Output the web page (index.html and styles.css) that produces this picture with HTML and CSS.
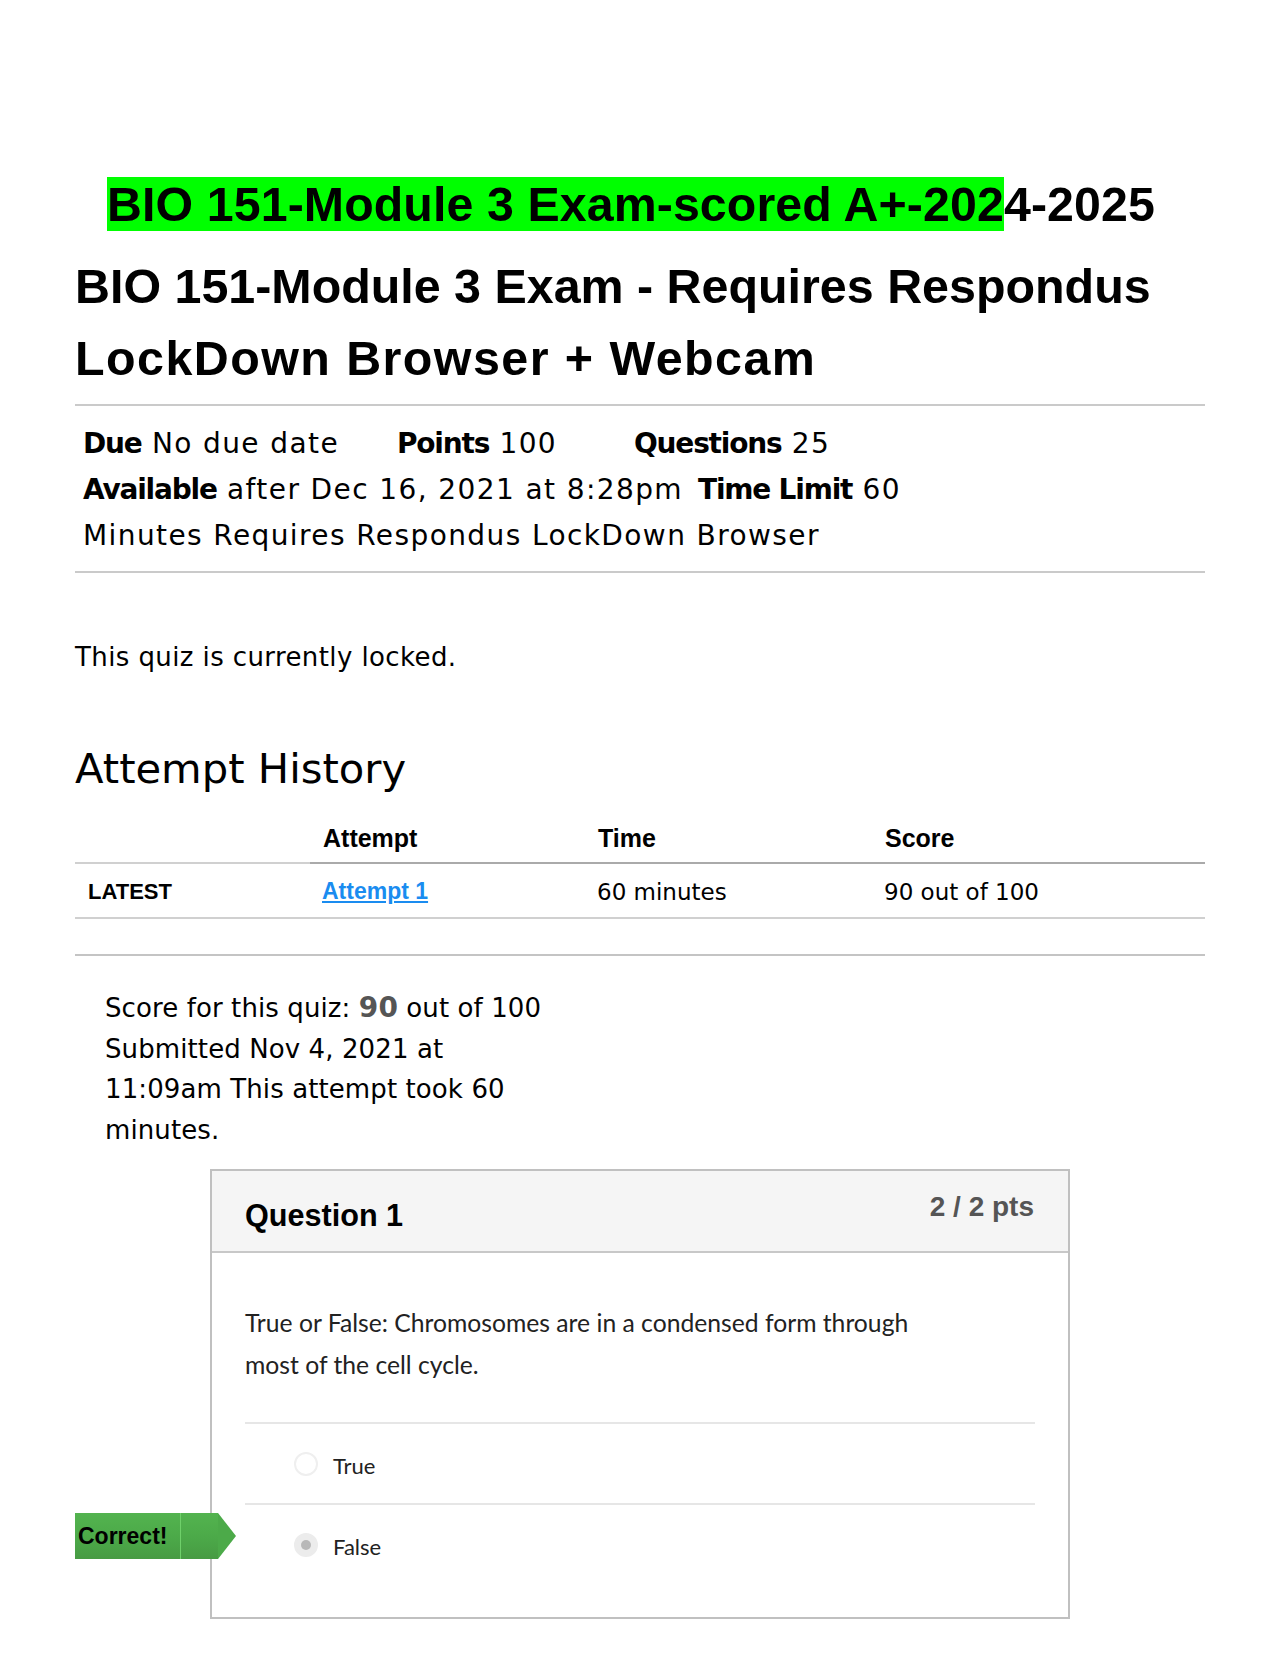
FILE: index.html
```html
<!DOCTYPE html>
<html lang="en">
<head>
<meta charset="utf-8">
<title>BIO 151-Module 3 Exam</title>
<link rel="stylesheet" href="styles.css">
</head>
<body>
<div class="page">
  <div class="doc-title"><span class="hl">BIO 151-Module 3 Exam-scored A+-202</span>4-2025</div>
  <h1 class="quiz-title">BIO 151-Module 3 Exam - Requires Respondus<br><span class="quiz-title-2">LockDown Browser + Webcam</span></h1>
  <hr class="rule rule-top">
  <div class="meta">
    <div class="meta-line">
      <span class="meta-item w1"><b>Due</b> No due date</span>
      <span class="meta-item w2"><b>Points</b> 100</span>
      <span class="meta-item"><b>Questions</b> 25</span>
    </div>
    <div class="meta-line">
      <span class="meta-item w3"><b>Available</b> after Dec 16, 2021 at 8:28pm</span>
      <span class="meta-item"><b>Time Limit</b> 60</span>
    </div>
    <div class="meta-line">
      <span class="meta-item">Minutes Requires Respondus LockDown Browser</span>
    </div>
  </div>
  <hr class="rule rule-meta">
  <p class="locked">This quiz is currently locked.</p>
  <h2 class="history-title">Attempt History</h2>
  <table class="history">
    <colgroup>
      <col class="c1"><col class="c2"><col class="c3"><col class="c4">
    </colgroup>
    <thead>
      <tr>
        <th class="blank"></th>
        <th>Attempt</th>
        <th>Time</th>
        <th>Score</th>
      </tr>
    </thead>
    <tbody>
      <tr>
        <td class="latest">LATEST</td>
        <td><a href="#" class="attempt-link">Attempt 1</a></td>
        <td>60 minutes</td>
        <td>90 out of 100</td>
      </tr>
    </tbody>
  </table>
  <hr class="rule rule-section">
  <div class="score">
    Score for this quiz: <span class="score-num">90</span> out of 100<br>
    Submitted Nov 4, 2021 at<br>
    11:09am This attempt took 60<br>
    minutes.
  </div>
  <div class="question">
    <div class="q-header">
      <span class="q-name">Question 1</span>
      <span class="q-pts">2 / 2 pts</span>
    </div>
    <div class="q-body">
      <p class="q-text">True or False: Chromosomes are in a condensed form through<br>most of the cell cycle.</p>
      <div class="answers">
        <div class="answer">
          <span class="radio"></span>
          <span class="answer-label">True</span>
        </div>
        <div class="answer">
          <span class="radio radio-checked"></span>
          <span class="answer-label">False</span>
        </div>
      </div>
    </div>
    <div class="badge">Correct!</div>
  </div>
</div>
</body>
</html>
```

FILE: styles.css
```css
* { box-sizing: border-box; }

html, body {
  margin: 0;
  padding: 0;
  background: #ffffff;
  color: #000000;
}

.page {
  width: 1280px;
  padding: 174px 75px 0 75px;
}

.doc-title {
  font-family: "Liberation Sans", Arial, sans-serif;
  font-weight: bold;
  font-size: 48.3px;
  line-height: 60px;
  letter-spacing: 0.1px;
  text-align: center;
  padding-right: 18px;
  white-space: nowrap;
}

.hl {
  background: #00ff00;
}

.quiz-title {
  margin: 16px 0 0 0;
  font-family: "Liberation Sans", Arial, sans-serif;
  font-weight: bold;
  font-size: 48.4px;
  line-height: 72px;
  white-space: nowrap;
}

.quiz-title-2 {
  letter-spacing: 1.45px;
}

.rule {
  border: 0;
  height: 2px;
  margin: 0;
  background: #cacaca;
}

.rule-top { margin-top: 10px; }

.meta {
  padding: 15px 0 0 8px;
  font-family: "DejaVu Sans", Verdana, sans-serif;
  font-size: 28px;
  letter-spacing: 1.4px;
  line-height: 46px;
}

.meta-line {
  display: flex;
  white-space: nowrap;
}

.meta-item b {
  font-weight: bold;
  letter-spacing: -1.2px;
}

.w1 { width: 314px; }
.w2 { width: 237px; }
.w3 { width: 615px; }

.rule-meta { margin-top: 12px; }

.locked {
  margin: 66px 0 0 0;
  font-family: "DejaVu Sans", Verdana, sans-serif;
  font-size: 26px;
  letter-spacing: 0.4px;
  line-height: 36px;
}

.history-title {
  margin: 69px 0 0 0;
  font-family: "DejaVu Sans", Verdana, sans-serif;
  font-weight: normal;
  font-size: 41.7px;
  line-height: 50px;
}

.history {
  margin-top: 21px;
  width: 1130px;
  border-collapse: collapse;
  table-layout: fixed;
}

.c1 { width: 235px; }
.c2 { width: 275px; }
.c3 { width: 287px; }
.c4 { width: 333px; }

.history th {
  height: 48px;
  padding: 0 0 0 13px;
  text-align: left;
  vertical-align: middle;
  font-family: "Liberation Sans", Arial, sans-serif;
  font-weight: bold;
  font-size: 25px;
  border-bottom: 2px solid #aaaaaa;
}

.history th.blank {
  border-bottom-color: #d0d0d0;
}

.history td {
  height: 55px;
  padding: 2px 0 0 12px;
  vertical-align: middle;
  font-family: "DejaVu Sans", Verdana, sans-serif;
  font-size: 23px;
  border-bottom: 2px solid #d0d0d0;
}

.history td.latest {
  padding-left: 13px;
  font-family: "Liberation Sans", Arial, sans-serif;
  font-weight: bold;
  font-size: 22px;
}

.attempt-link {
  font-family: "Liberation Sans", Arial, sans-serif;
  font-weight: bold;
  color: #1a8cf0;
  text-decoration: underline;
}

.rule-section {
  margin-top: 35px;
  background: #c4c4c4;
}

.score {
  margin: 32px 0 0 30px;
  font-family: "DejaVu Sans", Verdana, sans-serif;
  font-size: 26px;
  letter-spacing: 0.1px;
  line-height: 40.5px;
}

.score-num {
  font-weight: bold;
  font-size: 28px;
  color: #555555;
}

.question {
  position: relative;
  margin: 19px 0 0 135px;
  width: 860px;
  border: 2px solid #c0c0c0;
  background: #ffffff;
}

.q-header {
  display: flex;
  justify-content: space-between;
  align-items: flex-start;
  height: 82px;
  padding: 0 34px 0 33px;
  background: #f5f5f5;
  border-bottom: 2px solid #c8c8c8;
  font-family: "Liberation Sans", Arial, sans-serif;
  font-weight: bold;
}

.q-name {
  margin-top: 26px;
  font-size: 30.6px;
  line-height: 36px;
  color: #000000;
}

.q-pts {
  margin-top: 20px;
  font-size: 28px;
  line-height: 32px;
  color: #555555;
}

.q-body {
  padding: 49px 33px 33px 33px;
  font-family: Lato, "Open Sans", sans-serif;
  color: #222222;
}

.q-text {
  margin: 0;
  font-size: 24.7px;
  line-height: 42px;
}

.answers {
  margin-top: 36px;
}

.answer {
  display: flex;
  align-items: center;
  height: 81px;
  padding-left: 49px;
  border-top: 2px solid #e6e6e6;
}

.radio {
  width: 24px;
  height: 24px;
  border-radius: 50%;
  border: 2px solid #efefef;
  background: #ffffff;
  flex: none;
  position: relative;
}

.radio-checked {
  background: #ececec;
  border-color: #ececec;
}

.radio-checked::after {
  content: "";
  position: absolute;
  left: 5px;
  top: 5px;
  width: 10px;
  height: 10px;
  border-radius: 50%;
  background: #b8b8b8;
}

.answer-label {
  margin-left: 15px;
  font-size: 22px;
  line-height: 30px;
  padding-top: 4px;
}

.badge {
  position: absolute;
  left: -137px;
  top: 342px;
  width: 143px;
  height: 46px;
  padding-left: 3px;
  background: linear-gradient(#53b34f 0%, #4caa49 50%, #479b43 100%);
  font-family: "Liberation Sans", Arial, sans-serif;
  font-weight: bold;
  font-size: 23px;
  line-height: 46px;
  color: #000000;
}

.badge::before {
  content: "";
  position: absolute;
  left: 105px;
  top: 0;
  width: 1px;
  height: 46px;
  background: #6fd06a;
}

.badge::after {
  content: "";
  position: absolute;
  right: -18px;
  top: 0;
  width: 0;
  height: 0;
  border-top: 23px solid transparent;
  border-bottom: 23px solid transparent;
  border-left: 18px solid #4caa49;
}
```
